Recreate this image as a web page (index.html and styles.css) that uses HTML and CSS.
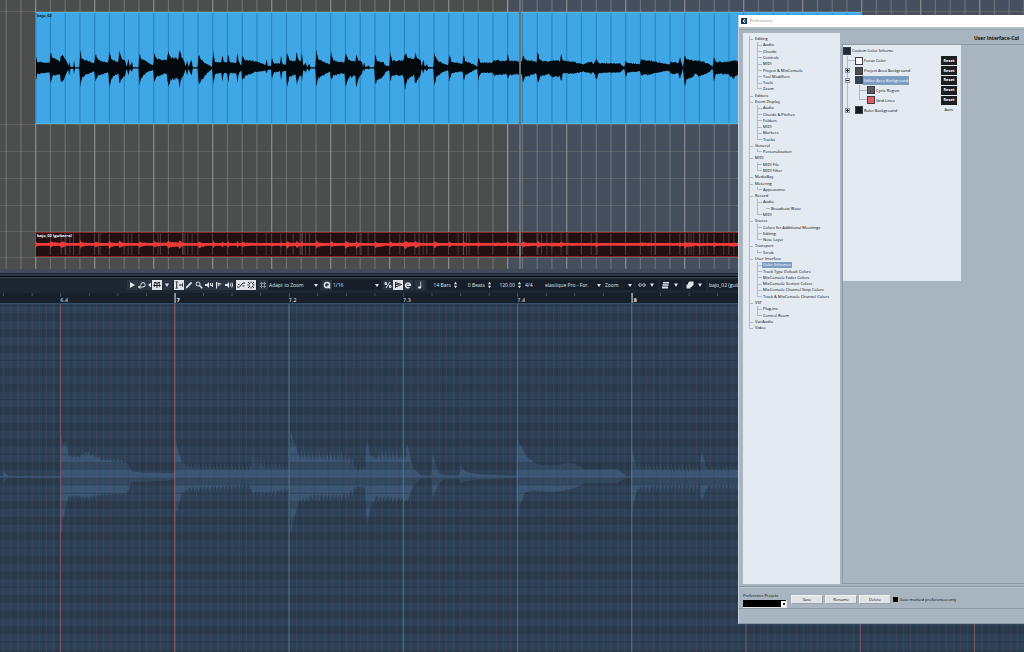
FILE: index.html
```html
<!DOCTYPE html>
<html lang="en">
<head>
<meta charset="utf-8">
<title>Preferences</title>
<link rel="stylesheet" href="styles.css">
</head>
<body>
<main class="workspace">
  <svg class="arrange" id="arrange" role="img" aria-label="Project window"></svg>
  <div class="splitter"></div>

  <div class="toolbar">
    <div class="group">
      <button class="tool" aria-label="Play"><svg viewBox="0 0 10 10"><path d="M3 2l5 3-5 3z"/></svg></button>
      <button class="tool" aria-label="Loop"><svg viewBox="0 0 10 10"><path class="stroke" d="M3.500 7h2.500a2.200 2.200 0 1 0-2.200-2.200M1 7h3M3.500 5.500L1.500 7l2 1.500"/></svg></button>
      <button class="tool tiny" aria-label="Volume"><svg viewBox="0 0 5 10"><path d="M4 2.500v5L1 5z"/></svg></button>
      <button class="tool on" aria-label="Auto-scroll"><svg viewBox="0 0 10 10"><path d="M2 2h2.300v1.500H2zM5.700 2H8v1.500H5.700zM4.500 2.500h1v5.500h-1zM1 5.500l2-1.700v1.200h1.500v1H3v1.200zM9 5.500L7 3.800v1.200H5.500v1H7v1.200z"/></svg></button>
      <button class="tool" aria-label="Auto-scroll options"><svg viewBox="0 0 10 10"><path d="M3 3.500h4L5 7z"/></svg></button>
    </div>
    <div class="group">
      <button class="tool on" aria-label="Range selection"><svg viewBox="0 0 10 10"><path d="M1.500 1.500H4v.8H3.200v5.400H4v.8H1.500v-.8h.7V2.300h-.7zM5 4.500h3V3.300h.8v3.400H8V5.500H5z"/></svg></button>
      <button class="tool" aria-label="Draw"><svg viewBox="0 0 10 10"><path d="M1.500 8.500l.8-2L7 1.800l1.200 1.200-4.700 4.700z"/></svg></button>
      <button class="tool" aria-label="Magnify"><svg viewBox="0 0 10 10"><circle class="stroke" cx="4" cy="4" r="2"/><path class="heavy" d="M5.500 5.500l2.700 2.700"/></svg></button>
      <button class="tool" aria-label="Audition"><svg viewBox="0 0 10 10"><path d="M1 4h2l2-2v6L3 6H1z"/><path class="stroke" d="M6.500 3v2.500h2M8.500 3v4"/></svg></button>
      <button class="tool" aria-label="Scrub"><svg viewBox="0 0 10 10"><path d="M2 2h1v6.500H2zM3.500 2.500l5 1.500-5 .8zM3.500 5.200h3l-3 1.300z"/></svg></button>
      <button class="tool" aria-label="Speaker"><svg viewBox="0 0 10 10"><path d="M1 4h2l2-2v6L3 6H1z"/><path class="stroke" d="M6.300 3.500q1 1.500 0 3M7.800 2.500q1.500 2.500 0 5"/></svg></button>
    </div>
    <div class="group">
      <button class="tool on" aria-label="Snap to zero crossing"><svg viewBox="0 0 10 10"><path class="stroke" d="M1 7h2.500L7 3h2M2 4.500h1.500M6.500 6h2"/></svg></button>
      <button class="tool on" aria-label="Snap"><svg viewBox="0 0 10 10"><path class="stroke" d="M2 2l2 2M8 2L6 4M2 8l2-2M8 8L6 6M1.500 5h2M6.500 5h2M5 1.500V3M5 7v1.500"/></svg></button>
    </div>
    <div class="group">
      <span class="tool dim"><svg viewBox="0 0 10 10"><path class="stroke" d="M3.500 2v6M6.500 2v6M2 3.500h6M2 6.500h6"/></svg></span>
      <label class="pick grid-type"><select aria-label="Grid type"><option>Adapt to Zoom</option></select></label>
    </div>
    <div class="group">
      <button class="tool" aria-label="Apply quantize"><svg viewBox="0 0 10 10"><circle class="heavy" cx="5" cy="5" r="2.600"/><path class="heavy" d="M5.500 5.500L8 8.200"/></svg></button>
      <label class="pick quantize"><select aria-label="Quantize preset"><option>1/16</option></select></label>
    </div>
    <div class="group">
      <button class="tool" aria-label="Soft quantize"><svg viewBox="0 0 10 10"><path class="stroke" d="M2 2.500h1.500v2H2zM3 8l4-6M6.500 5.500H8v2H6.500z"/></svg></button>
      <button class="tool on" aria-label="Iterative quantize"><svg viewBox="0 0 10 10"><path class="stroke" d="M2.500 2v6M2.500 2.500L8.500 4.500 2.500 7M2.500 4.500h3"/></svg></button>
      <button class="tool" aria-label="Quantize panel"><svg viewBox="0 0 10 10"><path class="heavy" d="M3.500 5.200h3.800a2.400 2.400 0 1 0-.8 2"/></svg></button>
    </div>
    <div class="group">
      <button class="tool" aria-label="Musical mode"><svg viewBox="0 0 10 10"><ellipse cx="4.600" cy="7.400" rx="1.600" ry="1.200"/><path d="M5.400 1.500h.8v6h-.8z"/></svg></button>
    </div>
    <div class="group fields">
      <label class="step"><input aria-label="Length in bars" value="14 Bars"><svg viewBox="0 0 5 10"><path d="M.5 4L2.500 1l2 3zM.5 6l2 3 2-3z"/></svg></label>
      <label class="step"><input aria-label="Length in beats" value="0 Beats"><svg viewBox="0 0 5 10"><path d="M.5 4L2.500 1l2 3zM.5 6l2 3 2-3z"/></svg></label>
      <label class="step tempo"><input aria-label="Tempo" value="120.00"><svg viewBox="0 0 5 10"><path d="M.5 4L2.500 1l2 3zM.5 6l2 3 2-3z"/></svg></label>
      <input class="signature" aria-label="Time signature" value="4/4">
      <label class="pick algorithm"><select aria-label="Algorithm"><option>elastique Pro - For.</option></select></label>
      <label class="pick zoom"><select aria-label="Zoom preset"><option>Zoom</option></select></label>
    </div>
    <button class="menu" aria-label="Nudge"><svg viewBox="0 0 20 10"><path class="stroke" d="M3.500 3L1.500 5l2 2M6.500 3l2 2-2 2M3.500 5h3"/><path d="M13 3.500h4L15 7z"/></svg></button>
    <button class="menu" aria-label="Layers"><svg viewBox="0 0 20 10"><path d="M2 2h6v1.500H2zM1.500 4.200h6v1.500h-6zM1 6.400h6V8.500H1z"/><path d="M13 3.500h4L15 7z"/></svg></button>
    <button class="menu" aria-label="Colors"><svg viewBox="0 0 20 10"><path d="M4.500 1.500h4V5L6.500 7H5.500v1.500h-4v-4H3V3z"/><path d="M13 3.500h4L15 7z"/></svg></button>
    <span class="clip-name">bajo_02 (guitarra)</span>
  </div>

  <svg class="ruler" id="ruler" role="img" aria-label="Ruler"></svg>
  <svg class="editor" id="editor" role="img" aria-label="Sample editor"></svg>
</main>

<section class="dialog" role="dialog" aria-labelledby="dialog-title">
  <header class="titlebar">
    <svg class="logo" viewBox="0 0 6 6"><path fill="#12385c" d="M0 0h6v6H0z"/><path fill="none" stroke="#fff" d="M4 1.200L2 3l2 1.800"/><path fill="#6fc3ee" d="M3.500 2.500h1.500v1H3.500z"/></svg>
    <h1 class="title" id="dialog-title">Preferences</h1>
  </header>
  <div class="content">
    <nav class="side" aria-label="Preference pages">
      <ul class="tree">
        <li class="l1">Editing</li>
        <li class="l2">Audio</li><li class="l2">Chords</li><li class="l2">Controls</li><li class="l2">MIDI</li><li class="l2">Project &amp; MixConsole</li><li class="l2">Tool Modifiers</li><li class="l2">Tools</li><li class="l2 last">Zoom</li>
        <li class="l1">Editors</li>
        <li class="l1">Event Display</li>
        <li class="l2">Audio</li><li class="l2">Chords &amp; Pitches</li><li class="l2">Folders</li><li class="l2">MIDI</li><li class="l2">Markers</li><li class="l2 last">Tracks</li>
        <li class="l1">General</li>
        <li class="l2 last">Personalization</li>
        <li class="l1">MIDI</li>
        <li class="l2">MIDI File</li><li class="l2 last">MIDI Filter</li>
        <li class="l1">MediaBay</li>
        <li class="l1">Metering</li>
        <li class="l2 last">Appearance</li>
        <li class="l1">Record</li>
        <li class="l2">Audio</li><li class="l2 l3">Broadcast Wave</li><li class="l2 last">MIDI</li>
        <li class="l1">Scores</li>
        <li class="l2">Colors for Additional Meanings</li><li class="l2">Editing</li><li class="l2 last">Note Layer</li>
        <li class="l1">Transport</li>
        <li class="l2 last">Scrub</li>
        <li class="l1">User Interface</li>
        <li class="l2"><span class="selected">Color Schemes</span></li><li class="l2">Track Type Default Colors</li><li class="l2">MixConsole Fader Colors</li><li class="l2">MixConsole Section Colors</li><li class="l2">MixConsole Channel Strip Colors</li><li class="l2 last">Track &amp; MixConsole Channel Colors</li>
        <li class="l1">VST</li>
        <li class="l2">Plug-ins</li><li class="l2 last">Control Room</li>
        <li class="l1">VariAudio</li>
        <li class="l1 last">Video</li>
      </ul>
    </nav>
    <div class="page">
      <h2 class="heading">User Interface-Col</h2>
      <div class="frame">
        <ul class="scheme">
          <li class="row"><i class="swatch custom"></i><span>Custom Color Scheme</span></li>
          <li class="row node"><b class="box bare"></b><i class="swatch focus"></i><span>Focus Color</span><button class="reset">Reset</button></li>
          <li class="row node"><b class="box plus"></b><i class="swatch project"></i><span>Project Area Background</span><button class="reset">Reset</button></li>
          <li class="row node"><b class="box minus"></b><i class="swatch area"></i><span class="selected">Editor Area Background</span><button class="reset">Reset</button></li>
          <li class="row node child"><i class="swatch cycle"></i><span>Cycle Region</span><button class="reset">Reset</button></li>
          <li class="row node child end"><i class="swatch lines"></i><span>Grid Lines</span><button class="reset">Reset</button></li>
          <li class="row node final"><b class="box plus"></b><i class="swatch rulerbg"></i><span>Ruler Background</span><em class="auto">Auto</em></li>
        </ul>
      </div>
    </div>
  </div>
  <footer class="footer">
    <div class="presets">
      <label for="preset">Preference Presets</label>
      <div class="combo"><select id="preset"><option>-</option></select></div>
    </div>
    <button class="action">Save</button>
    <button class="action">Rename</button>
    <button class="action">Delete</button>
    <label class="only"><input type="checkbox">Save marked preferences only</label>
  </footer>
</section>
<script src="app.js"></script>
</body>
</html>
```
FILE: styles.css
```css
* { box-sizing: border-box; }
html, body { height: 100%; margin: 0; }
body {
  position: relative;
  overflow: hidden;
  background: #2b3e50;
  color: #dfe4ea;
  font: 5px/6px "Open Sans", "Noto Sans", sans-serif;
}
ul { list-style: none; margin: 0; padding: 0; }
button, input, select { font: inherit; color: inherit; border: 0; padding: 0; margin: 0; background: none; border-radius: 0; }
h1, h2 { margin: 0; }
svg { display: block; }

.workspace { display: grid; grid-template-rows: 269px 9px 15px 11px 1fr; height: 100%; }
.arrange, .ruler, .editor { width: 100%; height: 100%; min-height: 0; }
.splitter { background: linear-gradient(#434a59 0 4px, #1c2632 4px 5px, #2b3948 5px 7px, #020304 7px 8px, #3c4753 8px); }

.toolbar { display: flex; align-items: center; padding: 0 0 1px 127px; gap: 2px; background: #1d2733; white-space: nowrap; overflow: hidden; }
.group { display: flex; flex: none; height: 10px; background: #2a3441; }
.fields { background: none; }
.tool { flex: none; width: 10px; height: 10px; }
.tool.tiny { width: 5px; }
.tool svg, .menu svg { width: 100%; height: 10px; fill: #dfe4ea; }
.tool.on { background: #dfe3e8; }
.tool.on svg { fill: #1c2632; }
.tool.dim { opacity: .5; }
.toolbar .stroke { fill: none; stroke: #dfe4ea; stroke-width: 1; }
.toolbar .heavy { fill: none; stroke: #dfe4ea; stroke-width: 1.500; }
.toolbar .on .stroke { stroke: #1c2632; }
.pick { position: relative; display: block; background: #161f29; }
.pick select { appearance: none; display: block; width: 100%; height: 10px; padding-left: 1px; }
.pick::after { content: ""; position: absolute; right: 2px; top: 4px; border: 2px solid transparent; border-top: 3px solid #dfe4ea; border-bottom: 0; }
.grid-type { width: 52px; }
.quantize { width: 49px; }
.algorithm { width: 67px; }
.algorithm select { padding-left: 9px; }
.zoom { width: 30px; margin-left: 1px; }
.step { display: flex; align-items: center; width: 34px; background: #161f29; }
.step input { width: 26px; text-align: right; padding-right: 2px; }
.step svg { width: 5px; height: 8px; fill: #dfe4ea; }
.step.tempo { width: 29px; }
.step.tempo input { width: 22px; }
.signature { width: 12px; background: #161f29; padding-left: 1px; }
.menu { flex: none; width: 22px; height: 10px; background: #161f29; }
.clip-name { padding-left: 1px; line-height: 10px; background: #161f29; }

.ruler { background: #17202a; }
.ruler text { fill: #dfe4ea; font-size: 5px; font-family: "DejaVu Sans", sans-serif; }
.ruler .bar { font-weight: bold; }
.arrange text { font-size: 4px; font-weight: bold; }

.dialog {
  position: absolute; left: 738px; right: 0; top: 15px; bottom: 28px;
  display: grid; grid-template-rows: 12px 1fr 36px;
  background: #a8b4c0; color: #000;
  border-left: 1px solid #c9d2da; border-bottom: 1px solid #8b98a5;
  font-size: 4px;
}
.titlebar { display: flex; align-items: center; gap: 3px; padding-left: 2px; background: #fff; }
.logo { width: 6px; height: 6px; }
.title { font-size: 4px; font-weight: normal; color: #777; }
.content { display: grid; grid-template-columns: 97px 1fr; gap: 2px; padding: 4px 0 2px 4px; border-top: 2px solid #b2bdc7; border-bottom: 1px solid #8996a3; box-shadow: inset 0 1px #98a4b0; min-height: 0; }
.side { background: #e3eaf2; overflow: hidden; }
.tree { display: flex; flex-direction: column; height: 295px; margin: 3px 0 0 6px; position: relative; }
.tree li { flex: 1; display: flex; align-items: center; min-height: 0; position: relative; line-height: 6px; white-space: nowrap; }
.tree li::after { content: ""; position: absolute; left: 0; top: 0; bottom: 0; border-left: 1px solid #b0b8c1; }
.tree .l1.last::after { bottom: 50%; }
.tree .l1 { padding-left: 6px; }
.tree .l2 { padding-left: 14px; }
.tree .l3 { padding-left: 22px; }
.tree .l1::before { content: ""; position: absolute; left: 0; top: 50%; width: 4px; border-top: 1px solid #b0b8c1; }
.tree .l2::before { content: ""; position: absolute; left: 8px; top: 0; bottom: 0; width: 4px; border-left: 1px solid #b0b8c1; background: linear-gradient(#b0b8c1, #b0b8c1) 0 50% / 4px 1px no-repeat; }
.tree .l2.last::before { bottom: 50%; background-position: 0 100%; }
.tree .l3::before { width: 12px; background-position: 8px 50%; }
.selected { background: #7d9cc0; color: #fff; padding: 0 1px; margin-left: -1px; }

.page { display: grid; grid-template-rows: 11px 1fr; min-height: 0; overflow: hidden; }
.heading { font-size: 5px; line-height: 10px; color: #0c0f12; padding-left: 132px; white-space: nowrap; }
.frame { border-left: 1px solid #8d99a6; border-top: 1px solid #8d99a6; border-bottom: 1px solid #8d99a6; }
.scheme { width: 118px; height: 236px; padding-top: 1px; background: #e3eaf2; display: grid; grid-template-rows: repeat(7, minmax(0, 69fr)) 1162fr; }
.row { display: flex; align-items: center; position: relative; padding-right: 4px; white-space: nowrap; }
.row.node { padding-left: 12px; }
.row.child { padding-left: 24px; }
.row span { margin-left: 1px; line-height: 9px; }
.row .selected { margin-left: 0; }
.node::before { content: ""; position: absolute; left: 4px; top: 0; bottom: 0; border-left: 1px solid #b0b8c1; }
.final::before { bottom: 50%; }
.child::after { content: ""; position: absolute; left: 16px; top: 0; bottom: 0; width: 8px; border-left: 1px solid #b0b8c1; background: linear-gradient(#b0b8c1, #b0b8c1) 0 50% / 8px 1px no-repeat; }
.child.end::after { bottom: 50%; background-position: 0 100%; }
.box { position: absolute; left: 2px; width: 5px; height: 5px; border: 1px solid #8d97a1; }
.plus { background: linear-gradient(#20262c, #20262c) 1px 0 / 1px 3px no-repeat padding-box, linear-gradient(#20262c, #20262c) 0 1px / 3px 1px no-repeat padding-box, #e3eaf2; }
.minus { background: linear-gradient(#20262c, #20262c) 0 1px / 3px 1px no-repeat padding-box, #e3eaf2; }
.box.bare { left: 4px; width: 8px; height: 1px; border: 0; background: #b0b8c1; }
.swatch { flex: none; width: 8px; height: 8px; border: 1px solid #3b4046; z-index: 1; }
.custom { background: #202a35; }
.focus { background: #fff; }
.project { background: #494b4d; }
.area { background: #2e4259; }
.cycle { background: #5a5c5e; }
.lines { background: #e35d5f; }
.rulerbg { background: #141d24; }
.reset { margin-left: auto; width: 16px; height: 9px; background: #1c1e20; color: #fff; font-weight: bold; text-align: center; }
.auto { margin-left: auto; width: 16px; font-style: normal; text-align: center; }

.footer { display: flex; align-items: flex-start; gap: 2px; padding: 5px 0 0 4px; box-shadow: inset 0 1px #b9c3cc; background: linear-gradient(transparent 21px, #8f9ba8 21px 22px, transparent 22px); }
.presets { width: 44px; margin-right: 2px; white-space: nowrap; }
.presets label { display: block; line-height: 8px; }
.combo { position: relative; width: 44px; height: 8px; border: 1px solid #dfe5eb; border-width: 0 1px 1px 0; background: #000; color: #fff; }
.combo select { appearance: none; display: block; width: 100%; height: 7px; padding-left: 3px; }
.combo::after { content: ""; position: absolute; right: 0; top: 1px; width: 5px; height: 6px; background: linear-gradient(#222, #222) 2px 2px / 2px 2px no-repeat, #fff; }
.action { width: 32px; height: 9px; margin-top: 3px; background: #e1e3e5; border: 1px solid #eff1f3; border-right-color: #98a3ae; border-bottom-color: #98a3ae; }
.only { display: flex; align-items: center; gap: 2px; height: 9px; margin-top: 3px; }
.only input { appearance: none; width: 5px; height: 5px; background: #000; }
```
FILE: app.js
```js
const NS = 'http://www.w3.org/2000/svg';

function add(parent, name, attrs, text) {
  const el = document.createElementNS(NS, name);
  for (const key in attrs) el.setAttribute(key, attrs[key]);
  if (text) el.textContent = text;
  parent.appendChild(el);
  return el;
}
function rect(svg, x, y, width, height, fill, opacity = 1) {
  return add(svg, 'rect', { x, y, width, height, fill, opacity });
}
function noise(i) {
  const v = Math.sin(i * 12.9898) * 43758.5453;
  return v - Math.floor(v);
}
/* Envelope points are [x, above, below, comb], in thirds of a pixel. */
function wave(svg, points, cy, gain, floor, fill, rough) {
  const top = [], bottom = [];
  let k = 0;
  for (let x = points[0][0]; x < points[points.length - 1][0]; x += 1.5) {
    while (k < points.length - 2 && points[k + 1][0] <= x) k++;
    const a = points[k], b = points[k + 1];
    const t = (x - a[0]) / (b[0] - a[0]);
    const mix = i => a[i] + (b[i] - a[i]) * t;
    const comb = a[3] ? a[3] * Math.pow(1 - (x % 11) / 11, 2) : 0;
    const n = 1 - rough * noise(x), m = 1 - rough * noise(x + 7);
    top.push((x / 3).toFixed(2) + ' ' + (cy - Math.max(floor, (mix(1) * n + comb) * gain) / 3).toFixed(2));
    bottom.push((x / 3).toFixed(2) + ' ' + (cy + Math.max(floor, (mix(2) * m + comb * .7) * gain) / 3).toFixed(2));
  }
  add(svg, 'path', { d: 'M' + top.concat(bottom.reverse()).join('L') + 'Z', fill });
}

const bass = [
  [108,40,40],[112,20,20],[149,17,15],[152,56,58],[158,33,28],[180,22,22],[183,45,48],[190,38,40],[200,22,18],[205,5,5],[208,25,30],[211,3,3],[220,3,3],[222,25,22],[225,2,2],[238,2,2],
  [241,60,65],[245,30,35],[260,25,22],[283,14,12],[286,50,42],[295,25,25],[325,18,15],[328,55,70],[335,28,35],[355,18,18],[358,55,50],[365,30,40],[375,25,25],[380,3,3],[386,30,25],[389,3,3],[396,20,14],[399,2,2],[416,2,2],
  [418,52,60],[425,28,32],[440,22,15],[460,7,7],[463,50,55],[470,30,30],[500,25,18],[506,55,70],[512,35,40],[535,30,35],[538,62,65],[545,35,35],[553,25,20],[556,3,3],[562,25,25],[565,3,3],[575,28,28],[578,2,2],[593,2,2],
  [596,45,52],[605,25,40],[620,12,20],[636,4,4],[640,55,55],[645,20,22],[664,18,18],[667,45,45],[671,18,18],[682,18,18],[685,48,50],[689,18,18],[709,18,18],[712,48,50],[716,20,20],[724,8,8],[727,40,45],[735,26,28],[765,22,14],[797,10,10],[800,30,20],[803,7,7],[813,6,6],
  [816,32,35],[822,14,15],[840,14,12],[843,40,40],[847,14,12],[858,10,10],[861,52,65],[868,25,30],[887,22,22],[890,55,58],[896,25,35],[903,22,22],[906,50,45],[910,6,6],[918,18,15],[921,2,2],[928,15,12],[931,2,2],[946,2,2],
  [949,60,60],[955,30,35],[975,18,22],[990,12,12],[993,50,45],[1000,24,25],[1033,18,18],[1037,50,60],[1045,27,35],[1066,20,25],[1069,48,70],[1075,25,35],[1086,20,20],[1089,3,3],[1093,18,12],[1096,2,2],[1106,8,5],[1109,2,2],[1123,1,1],
  [1126,50,60],[1130,24,45],[1150,18,30],[1156,8,15],[1168,5,8],[1171,55,45],[1176,24,25],[1210,24,25],[1216,55,70],[1222,35,40],[1242,28,25],[1246,48,55],[1252,32,40],[1262,25,25],[1265,3,3],[1271,30,20],[1274,2,2],[1281,12,12],[1284,3,3],[1300,2,2],
  [1303,50,60],[1310,27,28],[1325,17,17],[1345,8,8],[1348,48,45],[1355,20,18],[1388,14,12],[1391,45,48],[1396,22,25],[1420,12,10],[1432,3,3],[1435,35,42],[1442,17,17],[1478,18,17],[1482,26,26],[1520,22,20],[1523,45,38],[1528,24,25],[1550,22,22],[1566,20,20],
  [1569,40,52],[1575,27,32],[1600,23,22],[1610,18,18],[1613,55,55],[1620,25,30],[1645,20,20],[1658,24,30],[1680,24,28],[1684,50,50],[1688,24,18],[1720,20,20],[1750,12,12],[1774,22,20],[1780,12,12],[1790,32,38],[1795,16,18],[1860,14,15],[1873,2,3],[1877,25,32],[1882,17,15],[1920,12,12],
  [1923,27,25],[1950,24,22],[2000,13,10],[2010,12,12],[2012,22,22],[2035,15,18],[2040,34,40],[2049,2,2],[2054,42,62],[2060,30,40],[2080,24,28],[2085,24,20],[2100,24,30],[2130,12,12],[2138,2,2],[2142,40,45],[2148,20,20],[2185,20,22],[2200,24,35],[2220,22,18],[2580,10,10]
];

const detail = [
  [0,3,3],[9,4,4],[11,22,20],[15,14,13],[26,3,3],[178,3,4],[181,2,2],[183,138,180],[189,100,130],[197,115,95],[206,65,60,12],[235,58,58,14],[258,72,62,14],[300,54,54,10],[380,42,50,10],[395,18,16],[430,14,15],[523,12,10],
  [526,120,115],[532,95,105],[547,40,45,18],[570,26,32,26],[752,20,22,24],[756,45,45,22],[800,28,45,25],[868,22,34,20],[873,140,170],[885,105,120],[900,60,70,30],[940,55,55,34],[1045,48,52,28],[1070,22,28,15],[1095,20,25],
  [1100,130,165],[1110,70,105],[1130,56,60,35],[1200,55,62,25],[1216,52,70],[1221,110,80],[1233,55,48],[1245,22,20],[1263,5,6],[1294,4,4],[1298,80,65],[1304,45,50],[1318,12,18],[1335,6,6],[1378,5,6],[1382,40,20],[1395,18,15],[1430,9,8],[1548,4,4],
  [1551,130,150],[1558,110,95],[1575,72,50],[1600,48,42],[1620,38,45],[1665,36,46],[1710,45,40],[1740,34,28],[1752,24,20],[1850,26,20],[1870,10,8],[1880,2,2],[1893,3,4],
  [1895,95,125],[1907,40,55],[1915,22,30,30],[1990,20,24,28],[2100,17,24,26],[2106,80,75],[2118,32,38],[2130,20,25,22],[2200,20,25,20],[2218,20,25],[3072,16,16]
];

function drawArrange(svg) {
  rect(svg, 0, 0, '100%', 300, '#4c4e4e');
  rect(svg, 507, 0, '100%', 300, '#464f5e');
  for (const y of [11, 124, 151, 178, 205, 231, 257]) rect(svg, 0, y, '100%', 1, '#686b6d', .7);
  const step = 14.75, start = 35.6;
  for (let i = -2; start + i * step < 2400; i++)
    rect(svg, start + i * step - .5, 0, 1.2, 269, '#96999a', i >= 0 && i % 4 === 0 ? .85 : .45);

  rect(svg, 35.5, 12, 825.5, 112, '#40a7e7');
  for (let i = 0; i < 56; i++) rect(svg, start + i * step - .5, 12, 1.2, 112, '#1f7cb5', .75);
  rect(svg, 35.5, 12, 825.5, 1, '#4fb8fa');
  rect(svg, 35.5, 123, 825.5, 1, '#4fb8fa');
  wave(svg, bass, 67.8, 1, 2, '#03090d', .22);
  add(svg, 'text', { x: 37, y: 17, fill: '#06202f' }, 'bajo_02');

  rect(svg, 35.5, 232, 825.5, 25, '#8b262b');
  rect(svg, 36, 233, 824.5, 23, '#231013');
  for (let i = 1; i < 56; i++) rect(svg, start + i * step - .5, 233, 1, 22, '#8a6f70', .5);
  const hits = [182,196,208,219,294,299,383,394,473,480,546,553,562,575,797,841,878,899,906,915,927,1068,1082,1103,1198,1243,1268,1279,1373,1389,1398,1406,1550,1612,1623,1639,1682,1702,1772,1790,1952,1965,2038,2055,2065,2072,2080,2098,2108,2120,2170,2200];
  for (const x of hits) rect(svg, x / 3, 233, 1, 22, '#8a6f70', .4);
  wave(svg, bass, 244.4, .23, 4, '#f03a3a', .3);
  add(svg, 'text', { x: 37, y: 237, fill: '#fff' }, 'bajo_02 (guitarra)');

  rect(svg, 507, 0, .6, 12, '#b5a56a');
  rect(svg, 507, 124, .6, 108, '#b5a56a');
  rect(svg, 519, 0, 2, 269, '#6f7274');
}

const beat = 114.25, firstBeat = 60.3;

function drawRuler(svg) {
  for (let i = -2; i < 70; i++) rect(svg, firstBeat + i * beat / 4, 0, .8, i % 4 ? 3 : 4, '#7b8691', .6);
  ['6.4', '7', '7.2', '7.3', '7.4', '8', '8.2', '8.3', '8.4'].forEach((label, i) => {
    const x = firstBeat + i * beat, bar = !label.includes('.');
    if (bar) rect(svg, x, 0, 1, 11, '#dfe4ea');
    add(svg, 'text', { x: bar ? x + 2 : x, y: 9, class: bar ? 'bar' : '' }, label);
  });
  rect(svg, 0, 10, '100%', 1, '#36506b');
}

function drawEditor(svg) {
  const key = 7.82, origin = 189.3;
  rect(svg, 0, 0, '100%', '100%', '#2e4257');
  wave(svg, detail, 173, 1, 2, '#3a5775', .1);
  for (let n = -60; n < 100; n++) {
    const y = origin + n * key, note = ((n % 12) + 12) % 12;
    if ([1, 3, 5, 8, 10].includes(note)) rect(svg, 0, y, '100%', key, '#1d2b35', .32);
    if (note === 0 || note === 7) rect(svg, 0, y - .4, '100%', .8, '#1b2a36', .45);
  }
  for (let i = -9; i < 360; i++) {
    const x = firstBeat + i * beat / 16;
    rect(svg, x, 0, 1, '100%', '#7b4b63', .27);
    if (i % 2) rect(svg, x + 3.5, 0, 1, '100%', '#1d2b3a', .15);
  }
  for (let i = 0; i < 20; i++)
    rect(svg, firstBeat + i * beat - .3, 0, 1, '100%', i === 1 ? '#b8605f' : [2, 3, 5].includes(i) ? '#5c7f95' : '#8d5964', .8);
}

drawArrange(document.getElementById('arrange'));
drawRuler(document.getElementById('ruler'));
drawEditor(document.getElementById('editor'));
```
